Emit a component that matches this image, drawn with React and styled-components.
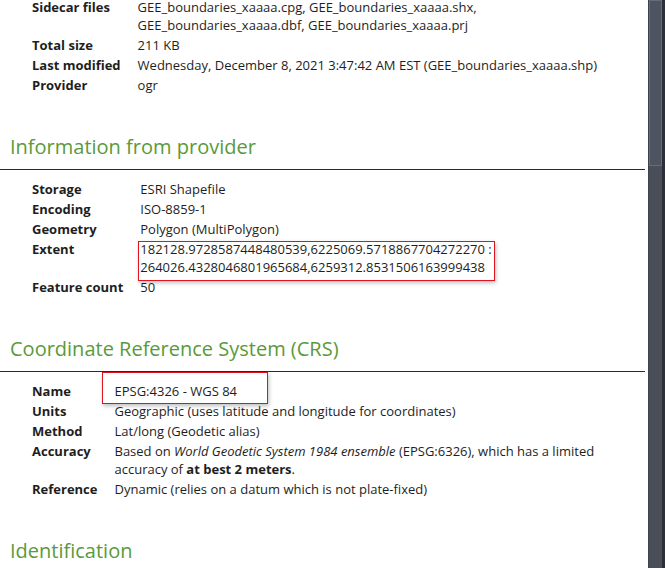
import React from 'react';
import styled, { createGlobalStyle } from 'styled-components';

const GlobalStyle = createGlobalStyle`
  html, body {
    margin: 0;
    padding: 0;
    background: #ffffff;
  }
  body {
    font-family: "Open Sans", "Noto Sans", sans-serif;
    color: #1e1e1e;
    overflow: hidden;
  }
`;

const Window = styled.div`
  display: flex;
  width: 665px;
  height: 568px;
  overflow: hidden;
`;

const Content = styled.div`
  flex: 1;
  padding-right: 3px;
  margin-top: -3px;
`;

const Heading = styled.h2`
  margin: 38px 0 0 0;
  padding: 0 0 8px 10px;
  font-size: 20px;
  line-height: 28px;
  font-weight: 400;
  color: #5a9a3a;
  border-bottom: ${(p) => (p.$noRule ? 'none' : '1px solid #2a2a2a')};
`;

const Table = styled.table`
  border-collapse: collapse;
  margin: ${(p) => (p.$first ? '0' : '9px')} 0 0 30px;
  font-size: 13px;
  line-height: 18px;
`;

const Label = styled.th`
  text-align: left;
  vertical-align: top;
  font-weight: 700;
  padding: 1px 17px 1px 2px;
  white-space: nowrap;
`;

const Value = styled.td`
  position: relative;
  vertical-align: top;
  padding: 1px 0;
`;

const Mark = styled.span`
  position: absolute;
  left: ${(p) => p.$left}px;
  top: ${(p) => p.$top}px;
  width: ${(p) => p.$width}px;
  height: ${(p) => p.$height}px;
  border: 1px solid #e0141e;
  box-shadow: 1px 2px 4px rgba(0, 0, 0, 0.25);
  pointer-events: none;
`;

const Scrollbar = styled.div`
  width: 17px;
  flex: none;
  display: flex;
  background: #2d3038;
`;

const Track = styled.div`
  width: 14px;
  background: #494e59;
  border-left: 1px solid #3e424b;
  box-sizing: border-box;
`;

const Thumb = styled.div`
  height: 166px;
  background: #4e5461;
  border: 1px solid #666d7a;
  box-sizing: border-box;
`;

const Row = ({ label, children }) => (
  <tr>
    <Label>{label}</Label>
    <Value>{children}</Value>
  </tr>
);

const App = () => (
  <Window>
    <GlobalStyle />
    <Content>
      <Table $first>
        <tbody>
          <Row label="Sidecar files">
            GEE_boundaries_xaaaa.cpg, GEE_boundaries_xaaaa.shx,
            <br />
            GEE_boundaries_xaaaa.dbf, GEE_boundaries_xaaaa.prj
          </Row>
          <Row label="Total size">211 KB</Row>
          <Row label="Last modified">
            Wednesday, December 8, 2021 3:47:42 AM EST (GEE_boundaries_xaaaa.shp)
          </Row>
          <Row label="Provider">ogr</Row>
        </tbody>
      </Table>

      <Heading>Information from provider</Heading>
      <Table>
        <tbody>
          <Row label="Storage">ESRI Shapefile</Row>
          <Row label="Encoding">ISO-8859-1</Row>
          <Row label="Geometry">Polygon (MultiPolygon)</Row>
          <Row label="Extent">
            182128.9728587448480539,6225069.5718867704272270 :
            <br />
            264026.4328046801965684,6259312.8531506163999438
            <Mark $left={-2} $top={2} $width={355} $height={38} />
          </Row>
          <Row label="Feature count">50</Row>
        </tbody>
      </Table>

      <Heading>Coordinate Reference System (CRS)</Heading>
      <Table>
        <tbody>
          <Row label="Name">
            EPSG:4326 - WGS 84
            <Mark $left={-12} $top={-9} $width={164} $height={30} />
          </Row>
          <Row label="Units">Geographic (uses latitude and longitude for coordinates)</Row>
          <Row label="Method">Lat/long (Geodetic alias)</Row>
          <Row label="Accuracy">
            Based on <em>World Geodetic System 1984 ensemble</em> (EPSG:6326), which has a limited
            <br />
            accuracy of <strong>at best 2 meters</strong>.
          </Row>
          <Row label="Reference">Dynamic (relies on a datum which is not plate-fixed)</Row>
        </tbody>
      </Table>

      <Heading $noRule>Identification</Heading>
    </Content>
    <Scrollbar>
      <Track>
        <Thumb />
      </Track>
    </Scrollbar>
  </Window>
);

export default App;
